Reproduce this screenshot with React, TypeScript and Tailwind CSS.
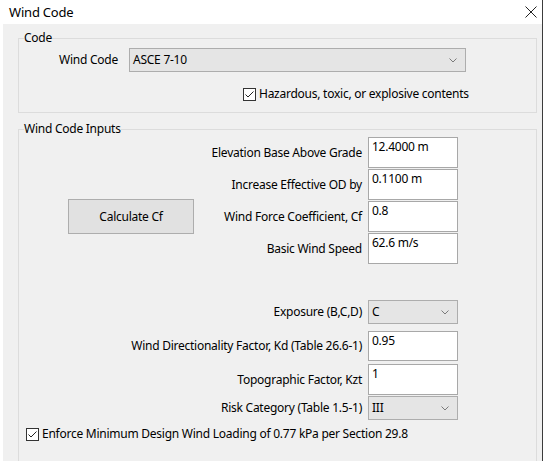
function Chevron() {
  return (
    <svg width="8" height="5" viewBox="0 0 8 5" className="shrink-0">
      <path d="M0.5 0.5 L4 4 L7.5 0.5" fill="none" stroke="#7a7a7a" strokeWidth={1} />
    </svg>
  );
}

function CheckBox() {
  return (
    <span className="w-[13px] h-[13px] border border-[#333] bg-white flex items-center justify-center shrink-0">
      <svg width="11" height="11" viewBox="0 0 11 11">
        <path d="M1.5 5.5 L4 8 L9.5 2.5" fill="none" stroke="#222" strokeWidth={1} />
      </svg>
    </span>
  );
}

function Select({ value, className }: { value: string; className: string }) {
  return (
    <div
      className={`h-[24px] bg-[#e5e5e5] border border-[#adadad] flex items-center justify-between pl-[3px] pr-[8px] ${className}`}
    >
      <span>{value}</span>
      <Chevron />
    </div>
  );
}

function TextBox({ value, h }: { value: string; h: string }) {
  return (
    <div className={`w-[90px] ${h} bg-white border border-[#a8a8a8] px-[3px] pt-[1px] leading-[16px]`}>
      {value}
    </div>
  );
}

function Row({ label, children, className = '' }: { label: string; children: React.ReactNode; className?: string }) {
  return (
    <div className={`flex items-center justify-end gap-[6px] ${className}`}>
      <span className="whitespace-nowrap">{label}</span>
      {children}
    </div>
  );
}

export default function App() {
  return (
    <div className="w-[547px] h-[461px] bg-white flex overflow-hidden text-[12px] leading-[16px] tracking-[-0.25px] text-black font-['Noto_Sans',sans-serif]">
      <div className="w-[543px] h-full flex flex-col border-r border-[#3c3c3c]">
        {/* title bar */}
        <div className="h-[24px] shrink-0 flex items-center justify-between pl-[9px] pr-[5px]">
          <span className="text-[13px] tracking-[-0.2px]">Wind Code</span>
          <svg width="12" height="12" viewBox="0 0 12 12">
            <path d="M0.5 0.5 L11.5 11.5 M11.5 0.5 L0.5 11.5" stroke="#222" strokeWidth={1} />
          </svg>
        </div>

        <div className="flex-1 bg-[#f0f0f0] ml-[3px] pl-[15px] pt-[6px]">
          {/* Code group */}
          <fieldset className="w-[519px] border border-[#dcdcdc] pb-[10px]">
            <legend className="ml-[5px] leading-[16px]">Code</legend>
            <div className="flex items-center mt-[2px]">
              <span className="w-[99px] text-right">Wind Code</span>
              <Select value="ASCE 7-10" className="ml-[11px] w-[337px]" />
            </div>
            <div className="flex items-center gap-[3px] pl-[224px] mt-[14px] h-[16px]">
              <CheckBox />
              <span>Hazardous, toxic, or explosive contents</span>
            </div>
          </fieldset>

          {/* Wind Code Inputs group */}
          <fieldset className="w-[519px] border border-[#dcdcdc] mt-[8px] pb-[40px]">
            <legend className="ml-[5px] leading-[16px]">Wind Code Inputs</legend>
            <div className="w-[439px]">
              <div className="flex">
                <button className="ml-[49px] mt-[62px] w-[126px] h-[35px] bg-[#e1e1e1] border border-[#adadad] shrink-0">
                  Calculate Cf
                </button>
                <div className="flex-1 flex flex-col gap-[1px]">
                  <Row label="Elevation Base Above Grade">
                    <TextBox value="12.4000 m" h="h-[31px]" />
                  </Row>
                  <Row label="Increase Effective OD by">
                    <TextBox value="0.1100 m" h="h-[31px]" />
                  </Row>
                  <Row label="Wind Force Coefficient, Cf">
                    <TextBox value="0.8" h="h-[31px]" />
                  </Row>
                  <Row label="Basic Wind Speed">
                    <TextBox value="62.6 m/s" h="h-[31px]" />
                  </Row>
                </div>
              </div>

              <Row label="Exposure (B,C,D)" className="mt-[36px]">
                <Select value="C" className="w-[90px]" />
              </Row>
              <Row label="Wind Directionality Factor, Kd (Table 26.6-1)" className="mt-[7px]">
                <TextBox value="0.95" h="h-[30px]" />
              </Row>
              <Row label="Topographic Factor, Kzt" className="mt-[3px]">
                <TextBox value="1" h="h-[31px]" />
              </Row>
              <Row label="Risk Category (Table 1.5-1)" className="mt-[1px]">
                <Select value="III" className="w-[90px]" />
              </Row>
            </div>
            <div className="flex items-center gap-[3px] pl-[7px] mt-[6px] h-[16px]">
              <CheckBox />
              <span>Enforce Minimum Design Wind Loading of 0.77 kPa per Section 29.8</span>
            </div>
          </fieldset>
        </div>
      </div>
    </div>
  );
}
